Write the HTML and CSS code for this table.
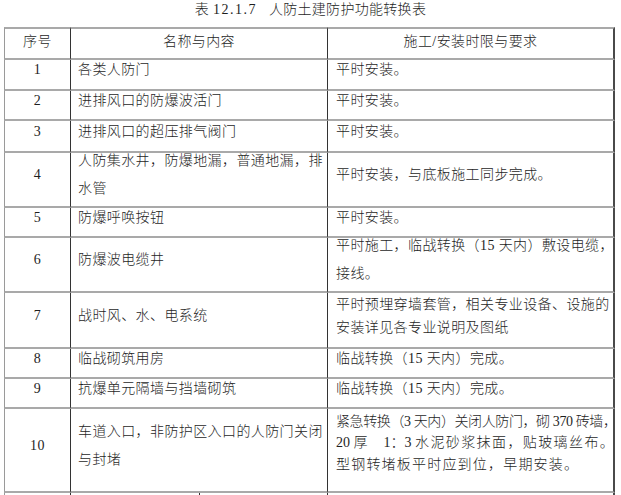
FILE: index.html
```html
<!DOCTYPE html>
<html lang="zh-CN">
<head>
<meta charset="utf-8">
<title>人防土建防护功能转换表</title>
<link rel="stylesheet" href="styles.css">
</head>
<body>
<div class="title">表 <span class="num">12.1.7</span><span class="gap"></span>人防土建防护功能转换表</div>
<div class="grid">
  <div class="cell c1 hd">序号</div>
  <div class="cell c2 hd center">名称与内容</div>
  <div class="cell c3 hd center">施工/安装时限与要求</div>

  <div class="cell c1">1</div>
  <div class="cell c2">各类人防门</div>
  <div class="cell c3">平时安装。</div>

  <div class="cell c1">2</div>
  <div class="cell c2">进排风口的防爆波活门</div>
  <div class="cell c3">平时安装。</div>

  <div class="cell c1">3</div>
  <div class="cell c2">进排风口的超压排气阀门</div>
  <div class="cell c3">平时安装。</div>

  <div class="cell c1">4</div>
  <div class="cell c2 lh28">人防集水井，防爆地漏，普通地漏，排<br>水管</div>
  <div class="cell c3">平时安装，与底板施工同步完成。</div>

  <div class="cell c1">5</div>
  <div class="cell c2">防爆呼唤按钮</div>
  <div class="cell c3">平时安装。</div>

  <div class="cell c1">6</div>
  <div class="cell c2">防爆波电缆井</div>
  <div class="cell c3 lh28">平时施工，临战转换（15 天内）敷设电缆，<br>接线。</div>

  <div class="cell c1">7</div>
  <div class="cell c2">战时风、水、电系统</div>
  <div class="cell c3 lh23">平时预埋穿墙套管，相关专业设备、设施的<br>安装详见各专业说明及图纸</div>

  <div class="cell c1">8</div>
  <div class="cell c2">临战砌筑用房</div>
  <div class="cell c3">临战转换（15 天内）完成。</div>

  <div class="cell c1">9</div>
  <div class="cell c2">抗爆单元隔墙与挡墙砌筑</div>
  <div class="cell c3">临战转换（15 天内）完成。</div>

  <div class="cell c1">10</div>
  <div class="cell c2 lh28">车道入口，非防护区入口的人防门关闭<br>与封堵</div>
  <div class="cell c3 lh22"><div class="lines"><span class="squeeze">紧急转换（3 天内）关闭人防门，砌 370 砖墙，</span><br><span class="plain">20 厚</span><span class="sp"></span><span class="plain">1：3 </span><span class="wide">水泥砂浆抹面，贴玻璃丝布。</span><br><span class="wide2">型钢转堵板平时应到位，早期安装。</span></div></div>
</div>
<div class="tail">
  <div class="tcell t1"></div>
  <div class="tcell t2"></div>
  <div class="tcell t3"></div>
  <div class="tcell t4"></div>
</div>
</body>
</html>
```
FILE: styles.css
```css
html, body {
  margin: 0;
  padding: 0;
  background: #ffffff;
}
body {
  overflow: hidden;
  color: #1e1e1e;
  font-family: "Liberation Serif", "Noto Sans CJK SC", serif;
  font-size: 14px;
  font-weight: 300;
}
.title {
  height: 27px;
  line-height: 20px;
  text-align: center;
  letter-spacing: 0.3px;
  white-space: nowrap;
}
.title .num {
  letter-spacing: 1.5px;
}
.title .gap {
  display: inline-block;
  width: 12px;
}
.grid {
  margin-left: 4px;
  display: grid;
  grid-template-columns: 67px 257px 287px;
  grid-template-rows: 33px 31px 30px 32px 55px 30px 55px 56px 30px 30px 84px;
}
.cell {
  box-sizing: border-box;
  border-bottom: 2px solid #a9a9a9;
  display: flex;
  flex-direction: column;
  justify-content: center;
  padding-bottom: 9px;
  line-height: 20px;
  letter-spacing: 0.4px;
  white-space: nowrap;
}
.hd {
  border-top: 2px solid #a9a9a9;
  padding-bottom: 3px;
}
.c1 {
  border-left: 1px solid #9a9a9a;
  border-right: 1px solid #333333;
  align-items: center;
  text-align: center;
}
.c2 {
  border-right: 1px solid #333333;
  padding-left: 7px;
}
.c3 {
  border-right: 2px solid #4a4a4a;
  padding-left: 8px;
}
.center {
  padding-left: 0;
  text-align: center;
}
.lh28 { line-height: 28px; }
.lh23 { line-height: 23px; }
.lh22 { line-height: 21.5px; padding-bottom: 14px; }
.squeeze { letter-spacing: -0.4px; }
.plain { letter-spacing: 0; }
.sp {
  display: inline-block;
  width: 16px;
}
.wide { letter-spacing: 1.4px; }
.wide2 { letter-spacing: 1.2px; }
.tail {
  margin-left: 4px;
  display: grid;
  grid-template-columns: 67px 129px 128px 287px;
  height: 20px;
}
.tcell {
  box-sizing: border-box;
  border-right: 1px solid #333333;
}
.t1 { border-left: 1px solid #9a9a9a; }
.t4 { border-right: 2px solid #4a4a4a; }
```
